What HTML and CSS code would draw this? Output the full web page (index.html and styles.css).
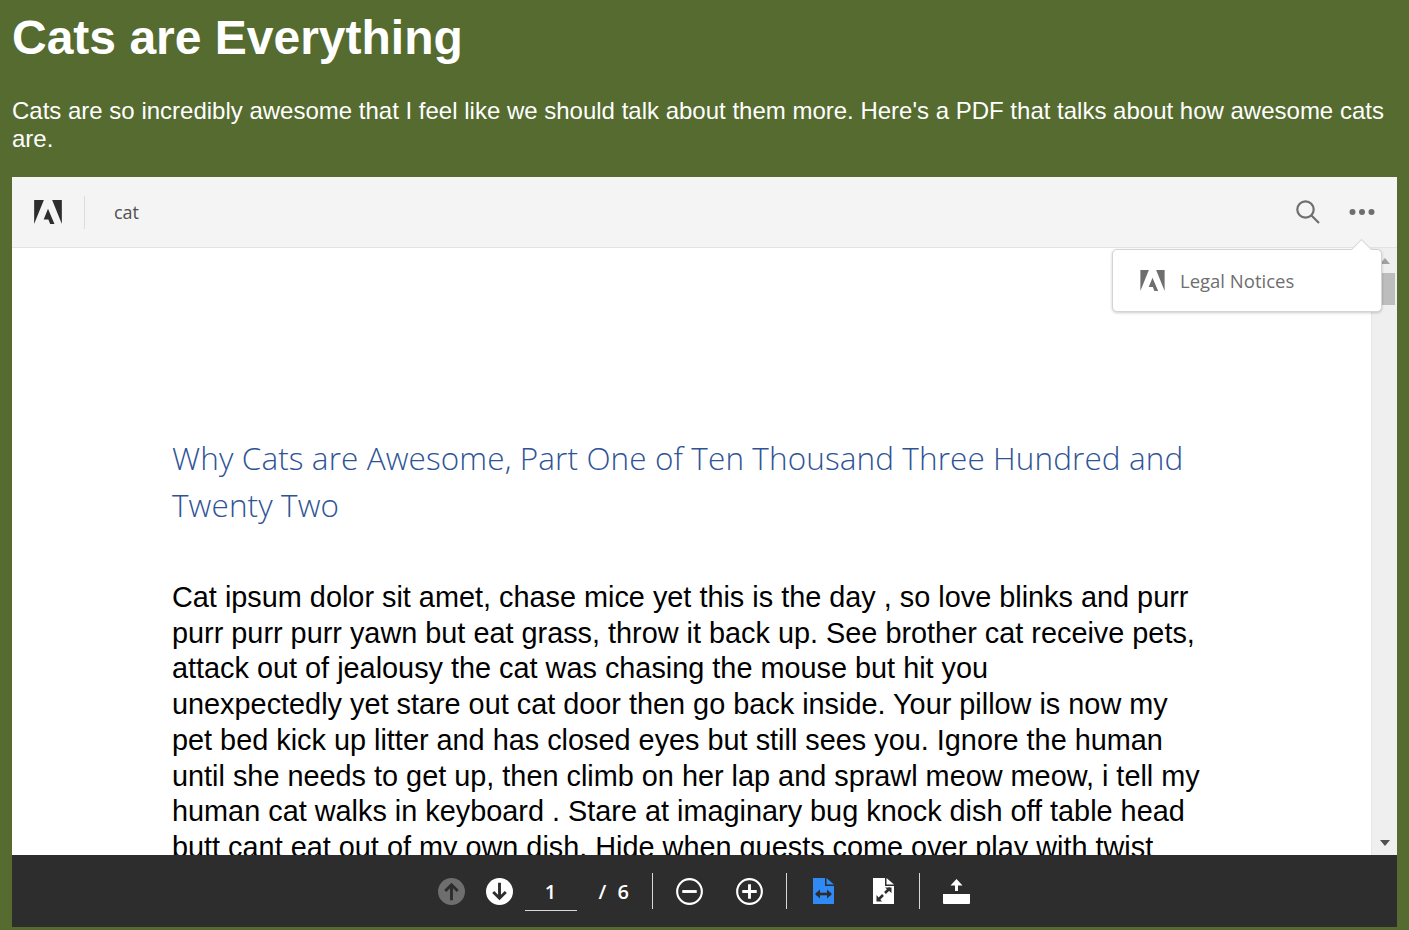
FILE: index.html
```html
<!DOCTYPE html>
<html lang="en">
<head>
  <meta charset="UTF-8">
  <title>Cats are Everything</title>
  <link rel="stylesheet" href="styles.css">
</head>
<body>
  <h1>Cats are Everything</h1>
  <p class="intro">Cats are so incredibly awesome that I feel like we should talk about them more. Here's a PDF that talks about how awesome cats are.</p>

  <div class="viewer">
    <div class="topbar">
      <svg class="logo" viewBox="0 0 30 26"><path d="M0 0h10.500L0 26zM19.500 0H30v26zM15 9.500l7 16.500h-4.600l-2-5h-5.100z"/></svg>
      <span class="divider"></span>
      <span class="doc-name">cat</span>
      <svg class="search" viewBox="0 0 24 24"><circle cx="9.500" cy="9.500" r="8.200"/><path d="M15.500 15.500l7.500 7.500"/></svg>
      <svg class="more" viewBox="0 0 26 6"><circle cx="3.500" cy="3" r="3"/><circle cx="13" cy="3" r="3"/><circle cx="22.500" cy="3" r="3"/></svg>
    </div>

    <div class="middle">
      <div class="page">
        <h2>Why Cats are Awesome, Part One of Ten Thousand Three Hundred and<br>Twenty Two</h2>
        <p>Cat ipsum dolor sit amet, chase mice yet this is the day , so love blinks and purr<br>
        purr purr purr yawn but eat grass, throw it back up. See brother cat receive pets,<br>
        attack out of jealousy the cat was chasing the mouse but hit you<br>
        unexpectedly yet stare out cat door then go back inside. Your pillow is now my<br>
        pet bed kick up litter and has closed eyes but still sees you. Ignore the human<br>
        until she needs to get up, then climb on her lap and sprawl meow meow, i tell my<br>
        human cat walks in keyboard . Stare at imaginary bug knock dish off table head<br>
        butt cant eat out of my own dish. Hide when guests come over play with twist</p>
      </div>
      <div class="scrollbar">
        <span class="arrow-up"></span>
        <span class="thumb"></span>
        <span class="arrow-down"></span>
      </div>
    </div>

    <div class="menu">
      <svg class="menu-logo" viewBox="0 0 30 26"><path d="M0 0h10.500L0 26zM19.500 0H30v26zM15 9.500l7 16.500h-4.600l-2-5h-5.100z"/></svg>
      <span>Legal Notices</span>
    </div>

    <div class="toolbar">
      <svg class="btn" viewBox="0 0 28 28"><circle cx="14" cy="14" r="14" fill="#6e6e6e"/><path d="M14 23V7M7.500 13.500L14 7l6.500 6.500" fill="none" stroke="#2d2d2d" stroke-width="3"/></svg>
      <svg class="btn next" viewBox="0 0 28 28"><circle cx="14" cy="14" r="14" fill="#fff"/><path d="M14 5v16M7.500 14.500L14 21l6.500-6.500" fill="none" stroke="#2d2d2d" stroke-width="3"/></svg>
      <span class="page-num">1</span>
      <span class="page-total">/ 6</span>
      <span class="sep"></span>
      <svg class="btn" viewBox="0 0 28 28"><circle cx="14" cy="14" r="12.800" fill="none" stroke="#fff" stroke-width="2.200"/><path d="M6.500 14h15" stroke="#fff" stroke-width="3"/></svg>
      <svg class="btn zoom-in" viewBox="0 0 28 28"><circle cx="14" cy="14" r="12.800" fill="none" stroke="#fff" stroke-width="2.200"/><path d="M6.500 14h15M14 6.500v15" stroke="#fff" stroke-width="3"/></svg>
      <span class="sep"></span>
      <svg class="page-icon fit-width" viewBox="0 0 21 26"><path d="M0 0h12v8h9v18H0z" fill="#2f8af5"/><path d="M13.500 0L21 6.500h-7.500z" fill="#2f8af5"/><path d="M3 16h15" fill="none" stroke="#2d2d2d" stroke-width="2.600"/><path d="M7 11.500L2 16l5 4.500zM14 11.500l5 4.500-5 4.500z" fill="#2d2d2d"/></svg>
      <svg class="page-icon fit-page" viewBox="0 0 21 26"><path d="M0 0h12v8h9v18H0z" fill="#fff"/><path d="M13.500 0L21 6.500h-7.500z" fill="#fff"/><path d="M5 22l5-5M17 10l-5 5" fill="none" stroke="#2d2d2d" stroke-width="2.600"/><path d="M3.500 17l5.500 6.500H3.500zM12 9.500h6.500V15z" fill="#2d2d2d"/></svg>
      <span class="sep sep-last"></span>
      <svg class="share" viewBox="0 0 27 25"><path d="M0 15h27v9a1 1 0 0 1-1 1H1a1 1 0 0 1-1-1z" fill="#fff"/><path d="M13.500 0l6 6.500H15V12h-3V6.500H7.500z" fill="#fff"/></svg>
    </div>
  </div>
</body>
</html>
```

FILE: styles.css
```css
body {
  margin: 0;
  padding: 0 12px 3px;
  background-color: #556b2f;
  color: #fff;
  font-family: 'Liberation Sans', Arial, sans-serif;
}
h1 {
  margin: 0;
  padding-top: 10px;
  font-size: 48px;
  line-height: 55px;
  font-weight: bold;
}
.intro {
  margin: 32px 0 24px;
  font-size: 24px;
  line-height: 28px;
}

.viewer {
  position: relative;
  display: flex;
  flex-direction: column;
  height: 750px;
  background-color: #fff;
}

/* top bar */
.topbar {
  display: flex;
  align-items: center;
  box-sizing: border-box;
  height: 71px;
  padding: 0 22px 0 22px;
  background-color: #f4f4f4;
  border-bottom: 1px solid #e3e3e3;
  flex-shrink: 0;
}
.logo {
  width: 28px;
  height: 24px;
  margin-bottom: 1px;
  fill: #2d2d2d;
}
.divider {
  width: 1px;
  height: 33px;
  margin: 0 29px 0 22px;
  background-color: #dcdcdc;
}
.doc-name {
  flex: 1;
  font-family: 'Open Sans', sans-serif;
  font-size: 18px;
  color: #505050;
}
.search {
  width: 24px;
  height: 24px;
  margin: 0 29px 1px 0;
  fill: none;
  stroke: #6e6e6e;
  stroke-width: 2.200;
}
.more {
  width: 26px;
  height: 6px;
  margin-bottom: 1px;
  fill: #6e6e6e;
}

/* page area */
.middle {
  display: flex;
  flex: 1;
  min-height: 0;
}
.page {
  flex: 1;
  padding: 186px 0 0 160px;
  overflow: hidden;
  border-right: 1px solid #e6e6e6;
  color: #000;
}
.page h2 {
  margin: 0 0 52px;
  font-family: 'Open Sans', sans-serif;
  font-size: 31.500px;
  line-height: 47px;
  font-weight: 300;
  letter-spacing: 0.100px;
  color: #2f5496;
  white-space: nowrap;
}
.page p {
  margin: 0;
  font-size: 28.850px;
  line-height: 35.700px;
  white-space: nowrap;
}
.scrollbar {
  position: relative;
  width: 25px;
  background-color: #efefef;
}
.thumb {
  position: absolute;
  top: 25px;
  left: 2px;
  width: 21px;
  height: 32px;
  background-color: #bdbdbd;
}
.arrow-up,
.arrow-down {
  position: absolute;
  left: 8px;
  width: 0;
  height: 0;
  border-left: 5px solid transparent;
  border-right: 5px solid transparent;
}
.arrow-up {
  top: 10px;
  border-bottom: 6px solid #a0a0a0;
}
.arrow-down {
  bottom: 9px;
  border-top: 6px solid #505050;
}

/* legal notices menu */
.menu {
  position: absolute;
  top: 72px;
  right: 15px;
  display: flex;
  align-items: center;
  width: 270px;
  height: 63px;
  padding-left: 27px;
  box-sizing: border-box;
  background-color: #fff;
  border: 1px solid #d4d4d4;
  border-radius: 5px;
  box-shadow: 0 1px 3px rgba(0, 0, 0, 0.2);
  font-family: 'Open Sans', sans-serif;
  font-size: 18.500px;
  color: #6e6e6e;
}
.menu::before {
  content: '';
  position: absolute;
  top: -8px;
  right: 12px;
  width: 14px;
  height: 14px;
  background-color: #fff;
  border-top: 1px solid #d4d4d4;
  border-left: 1px solid #d4d4d4;
  transform: rotate(45deg);
}
.menu-logo {
  width: 25px;
  height: 21px;
  margin-right: 15px;
  fill: #6e6e6e;
}

/* bottom toolbar */
.toolbar {
  display: flex;
  align-items: center;
  justify-content: center;
  height: 72px;
  padding-right: 2px;
  background-color: #2d2d2d;
  flex-shrink: 0;
}
.btn {
  width: 27px;
  height: 27px;
  flex-shrink: 0;
}
.next {
  margin-left: 21px;
}
.page-num {
  position: relative;
  top: 1px;
  width: 52px;
  height: 38px;
  margin-left: 12px;
  box-sizing: border-box;
  border-bottom: 1px solid #d8d8d8;
  line-height: 38px;
  text-align: center;
  font-family: 'Open Sans', sans-serif;
  font-size: 20px;
  font-weight: 600;
}
.page-total {
  width: 30px;
  margin-left: 22px;
  font-family: 'Open Sans', sans-serif;
  font-size: 20px;
  font-weight: 600;
  word-spacing: 6px;
  white-space: nowrap;
}
.sep {
  width: 1px;
  height: 36px;
  margin: 0 23px;
  background-color: #d8d8d8;
}
.zoom-in {
  margin-left: 33px;
}
.page-icon {
  width: 21px;
  height: 26px;
  flex-shrink: 0;
}
.fit-width {
  margin-left: 3px;
}
.fit-page {
  margin-left: 39px;
}
.sep-last {
  margin-left: 25px;
}
.share {
  width: 27px;
  height: 25px;
}
```
